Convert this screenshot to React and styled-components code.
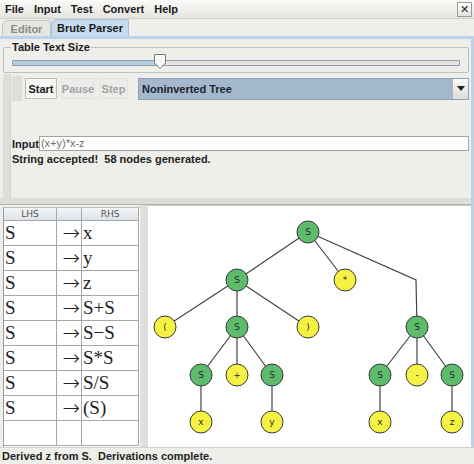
import React from "react";
import styled, { createGlobalStyle } from "styled-components";

const GlobalStyle = createGlobalStyle`
  html, body {
    margin: 0;
    padding: 0;
    background: #eeeeea;
  }
  body {
    font-family: "Liberation Sans", Arial, sans-serif;
  }
`;

const dots = `
  background-color: #f4f4f0;
  background-image: radial-gradient(#c2c2be 0.6px, transparent 0.8px);
  background-size: 2px 2px;
`;

const Window = styled.div`
  width: 474px;
  height: 464px;
  overflow: hidden;
  display: flex;
  flex-direction: column;
  background: #eeeeea;
  color: #222;
`;

const MenuBar = styled.div`
  height: 19px;
  box-sizing: border-box;
  display: flex;
  align-items: center;
  gap: 10px;
  padding: 0 2px 0 5px;
  background: linear-gradient(#fbfbf9, #e4e4e0);
  border-bottom: 1px solid #d0d0cc;
  font-weight: bold;
  font-size: 11px;
`;

const MenuItem = styled.span`
  color: #1a1a1a;
`;

const CloseButton = styled.div`
  margin-left: auto;
  width: 15px;
  height: 15px;
  box-sizing: border-box;
  border: 1px solid #9a9a96;
  background: linear-gradient(#ffffff, #e2e2de);
  display: flex;
  align-items: center;
  justify-content: center;
  font-family: "DejaVu Sans", sans-serif;
  font-size: 11px;
  font-weight: bold;
`;

const TabStrip = styled.div`
  height: 20px;
  box-sizing: border-box;
  display: flex;
  align-items: flex-end;
  padding-left: 2px;
  border-bottom: 3px solid #bcd2e8;
`;

const Tab = styled.div`
  width: ${(p) => p.$w}px;
  height: ${(p) => (p.$active ? "17px" : "16px")};
  box-sizing: border-box;
  display: flex;
  align-items: center;
  justify-content: center;
  font-size: 11px;
  font-weight: bold;
  color: ${(p) => (p.$active ? "#1a1a1a" : "#8a8a88")};
  background: ${(p) => (p.$active ? "#c6dbef" : "#e6e6e2")};
  border: 1px solid ${(p) => (p.$active ? "#a8c0d8" : "#c4c4c0")};
  border-bottom: none;
  border-radius: 6px 2px 0 0;
`;

const Content = styled.div`
  flex: 1;
  display: flex;
  flex-direction: column;
  border-right: 3px solid #bcd2e8;
  min-height: 0;
`;

const SizeGroup = styled.fieldset`
  margin: 2px 2px 0 3px;
  padding: 0 8px 0 8px;
  height: 32px;
  box-sizing: border-box;
  border: 1px solid #c0c0bc;
  border-radius: 2px;
  min-width: 0;
`;

const GroupTitle = styled.legend`
  padding: 0 1px;
  margin-left: -1px;
  font-size: 11px;
  font-weight: bold;
  line-height: 12px;
  color: #1a1a1a;
`;

const Track = styled.div`
  position: relative;
  margin-top: 7px;
  height: 4px;
  border: 1px solid #8e9eae;
  border-radius: 1px;
  background: #e4e4e0;
`;

const TrackFill = styled.div`
  height: 100%;
  background: #b8cde2;
`;

const Thumb = styled.svg`
  position: absolute;
  top: -7px;
  margin-left: -6px;
`;

const TopPane = styled.div`
  margin-top: 1px;
  height: 124px;
  display: flex;
`;

const SideGrip = styled.div`
  width: 7px;
  margin-left: 3px;
  ${dots}
  border-right: 1px solid #d4d4d0;
`;

const TopBody = styled.div`
  flex: 1;
  display: flex;
  flex-direction: column;
  padding: 2px 2px 0 1px;
  min-width: 0;
`;

const Toolbar = styled.div`
  height: 25px;
  display: flex;
  align-items: center;
  gap: 4px;
`;

const ToolGrip = styled.div`
  width: 10px;
  height: 25px;
  ${dots}
  margin-right: -1px;
`;

const ToolButton = styled.div`
  width: ${(p) => p.$w}px;
  height: 21px;
  box-sizing: border-box;
  display: flex;
  align-items: center;
  justify-content: center;
  font-size: 11px;
  font-weight: bold;
  color: ${(p) => (p.$disabled ? "#a2a2a0" : "#1a1a1a")};
  border: 1px solid ${(p) => (p.$disabled ? "#e2e2de" : "#bcbcb8")};
  background: ${(p) => (p.$disabled ? "#ececea" : "#f6f6f4")};
`;

const Combo = styled.div`
  flex: 1;
  margin-left: 6px;
  height: 22px;
  box-sizing: border-box;
  display: flex;
  align-items: stretch;
  background: #a3b8cd;
  border: 1px solid #8fa2b6;
`;

const ComboText = styled.div`
  flex: 1;
  display: flex;
  align-items: center;
  padding-left: 3px;
  font-size: 11px;
  font-weight: bold;
  color: #1c2430;
`;

const ComboArrow = styled.div`
  width: 15px;
  display: flex;
  align-items: center;
  justify-content: center;
  background: linear-gradient(#fafafa, #dcdcd8);
  border-left: 1px solid #b4b4b0;
`;

const InputRow = styled.div`
  margin-top: 35px;
  display: flex;
  align-items: center;
  height: 15px;
`;

const Label = styled.span`
  font-size: 11px;
  font-weight: bold;
`;

const Field = styled.div`
  flex: 1;
  height: 15px;
  box-sizing: border-box;
  background: #fff;
  border: 1px solid #a4a4a0;
  font-size: 11px;
  color: #707070;
  line-height: 13px;
  padding-left: 1px;
`;

const Message = styled.div`
  font-size: 11px;
  font-weight: bold;
  margin-top: 2px;
`;

const HDivider = styled.div`
  height: 7px;
  box-sizing: border-box;
  ${dots}
  border-bottom: 1px solid #b0b0ac;
`;

const BottomPane = styled.div`
  flex: 1;
  display: flex;
  min-height: 0;
`;

const TableBox = styled.div`
  width: 137px;
  margin: 2px 0 0 3px;
  box-sizing: border-box;
  background: #fff;
  border-left: 1px solid #9a9a98;
  border-top: 1px solid #c0c0bc;
  display: grid;
  grid-template-columns: 53px 25px 57px;
  grid-template-rows: 13px;
  grid-auto-rows: 25px;
  align-content: start;
  overflow: hidden;
`;

const HeadCell = styled.div`
  box-sizing: border-box;
  display: flex;
  align-items: center;
  justify-content: center;
  font-family: "DejaVu Sans", sans-serif;
  font-size: 9px;
  color: #505050;
  background: linear-gradient(#f4f6f8, #dde3e9);
  border-right: 1px solid #a8a8a8;
  border-bottom: 1px solid #a8a8a8;
`;

const Cell = styled.div`
  box-sizing: border-box;
  display: flex;
  align-items: center;
  justify-content: ${(p) => (p.$arrow ? "flex-end" : "flex-start")};
  padding: ${(p) => (p.$arrow ? "0 1px 0 0" : "0 0 0 1px")};
  font-family: ${(p) =>
    p.$arrow ? '"DejaVu Sans ExtraLight", "DejaVu Sans", sans-serif' : '"Liberation Serif", "DejaVu Serif", serif'};
  font-weight: ${(p) => (p.$arrow ? 200 : 400)};
  font-size: ${(p) => (p.$arrow ? "21px" : "19px")};
  color: #222;
  border-right: 1px solid #a8a8a8;
  border-bottom: 1px solid #a8a8a8;
`;

const VDivider = styled.div`
  width: 8px;
  box-sizing: border-box;
  ${dots}
  border-left: 3px solid #e2e2de;
`;

const TreePanel = styled.div`
  flex: 1;
  background: #fff;
  border-top: 1px solid #c8c8c4;
  overflow: hidden;
`;

const StatusBar = styled.div`
  height: 17px;
  box-sizing: border-box;
  display: flex;
  align-items: center;
  padding-left: 2px;
  font-size: 11px;
  font-weight: bold;
  background: #eeeeea;
  border-top: 1px solid #d0d0cc;
`;

const rules = ["x", "y", "z", "S+S", "S\u2212S", "S*S", "S/S", "(S)", ""];

const nodes = [
  { x: 308, y: 232, l: "S", g: true },
  { x: 237, y: 280, l: "S", g: true },
  { x: 345, y: 280, l: "*" },
  { x: 165, y: 327, l: "(" },
  { x: 237, y: 327, l: "S", g: true },
  { x: 308, y: 327, l: ")" },
  { x: 417, y: 327, l: "S", g: true },
  { x: 201, y: 375, l: "S", g: true },
  { x: 237, y: 375, l: "+" },
  { x: 272, y: 375, l: "S", g: true },
  { x: 380, y: 375, l: "S", g: true },
  { x: 417, y: 375, l: "-" },
  { x: 452, y: 375, l: "S", g: true },
  { x: 201, y: 422, l: "x" },
  { x: 272, y: 422, l: "y" },
  { x: 380, y: 422, l: "x" },
  { x: 452, y: 422, l: "z" },
];

const edges = [
  [0, 1], [0, 2], [1, 3], [1, 4], [1, 5], [4, 7], [4, 8], [4, 9],
  [7, 13], [9, 14], [6, 10], [6, 11], [6, 12], [10, 15], [12, 16],
];

function ParseTree() {
  const p = (i) => `${nodes[i].x},${nodes[i].y}`;
  return (
    <svg width="323" height="241" viewBox="148 206 323 241">
      <g stroke="#444" strokeWidth="1.2" fill="none">
        {edges.map(([a, b]) => (
          <polyline key={`${a}-${b}`} points={`${p(a)} ${p(b)}`} />
        ))}
        <polyline points={`${p(0)} 416,280 ${p(6)}`} />
      </g>
      {nodes.map((n, i) => (
        <g key={i}>
          <circle cx={n.x} cy={n.y} r="11" fill={n.g ? "#5cbc6c" : "#f6f244"} stroke="#3a3a3a" strokeWidth="1" />
          <text x={n.x} y={n.y + 3} textAnchor="middle" fontSize="9" fontFamily="DejaVu Sans, sans-serif" fill="#2a2a2a">
            {n.l}
          </text>
        </g>
      ))}
    </svg>
  );
}

export default function App() {
  return (
    <>
      <GlobalStyle />
      <Window>
        <MenuBar>
          <MenuItem>File</MenuItem>
          <MenuItem>Input</MenuItem>
          <MenuItem>Test</MenuItem>
          <MenuItem>Convert</MenuItem>
          <MenuItem>Help</MenuItem>
          <CloseButton>✕</CloseButton>
        </MenuBar>
        <TabStrip>
          <Tab $w={49}>Editor</Tab>
          <Tab $active $w={78}>Brute Parser</Tab>
        </TabStrip>
        <Content>
          <SizeGroup>
            <GroupTitle>Table Text Size</GroupTitle>
            <Track>
              <TrackFill style={{ width: "33%" }} />
              <Thumb width="12" height="15" viewBox="0 0 12 15" style={{ left: "33%" }}>
                <path d="M0.5 0.5 H11.5 V9 L6 14.5 L0.5 9 Z" fill="#f8f8f6" stroke="#6c7a88" />
              </Thumb>
            </Track>
          </SizeGroup>
          <TopPane>
            <SideGrip />
            <TopBody>
              <Toolbar>
                <ToolGrip />
                <ToolButton $w={32}>Start</ToolButton>
                <ToolButton $disabled $w={34}>Pause</ToolButton>
                <ToolButton $disabled $w={29}>Step</ToolButton>
                <Combo>
                  <ComboText>Noninverted Tree</ComboText>
                  <ComboArrow>
                    <svg width="8" height="5" viewBox="0 0 8 5">
                      <path d="M0 0 H8 L4 5 Z" fill="#222" />
                    </svg>
                  </ComboArrow>
                </Combo>
              </Toolbar>
              <InputRow>
                <Label>Input</Label>
                <Field>(x+y)*x-z</Field>
              </InputRow>
              <Message>String accepted!&nbsp; 58 nodes generated.</Message>
            </TopBody>
          </TopPane>
          <HDivider />
          <BottomPane>
            <TableBox>
              <HeadCell>LHS</HeadCell>
              <HeadCell />
              <HeadCell>RHS</HeadCell>
              {rules.map((r, i) => (
                <React.Fragment key={i}>
                  <Cell>{r ? "S" : ""}</Cell>
                  <Cell $arrow>{r ? "\u2192" : ""}</Cell>
                  <Cell>{r}</Cell>
                </React.Fragment>
              ))}
            </TableBox>
            <VDivider />
            <TreePanel>
              <ParseTree />
            </TreePanel>
          </BottomPane>
        </Content>
        <StatusBar>Derived z from S.&nbsp; Derivations complete.</StatusBar>
      </Window>
    </>
  );
}
